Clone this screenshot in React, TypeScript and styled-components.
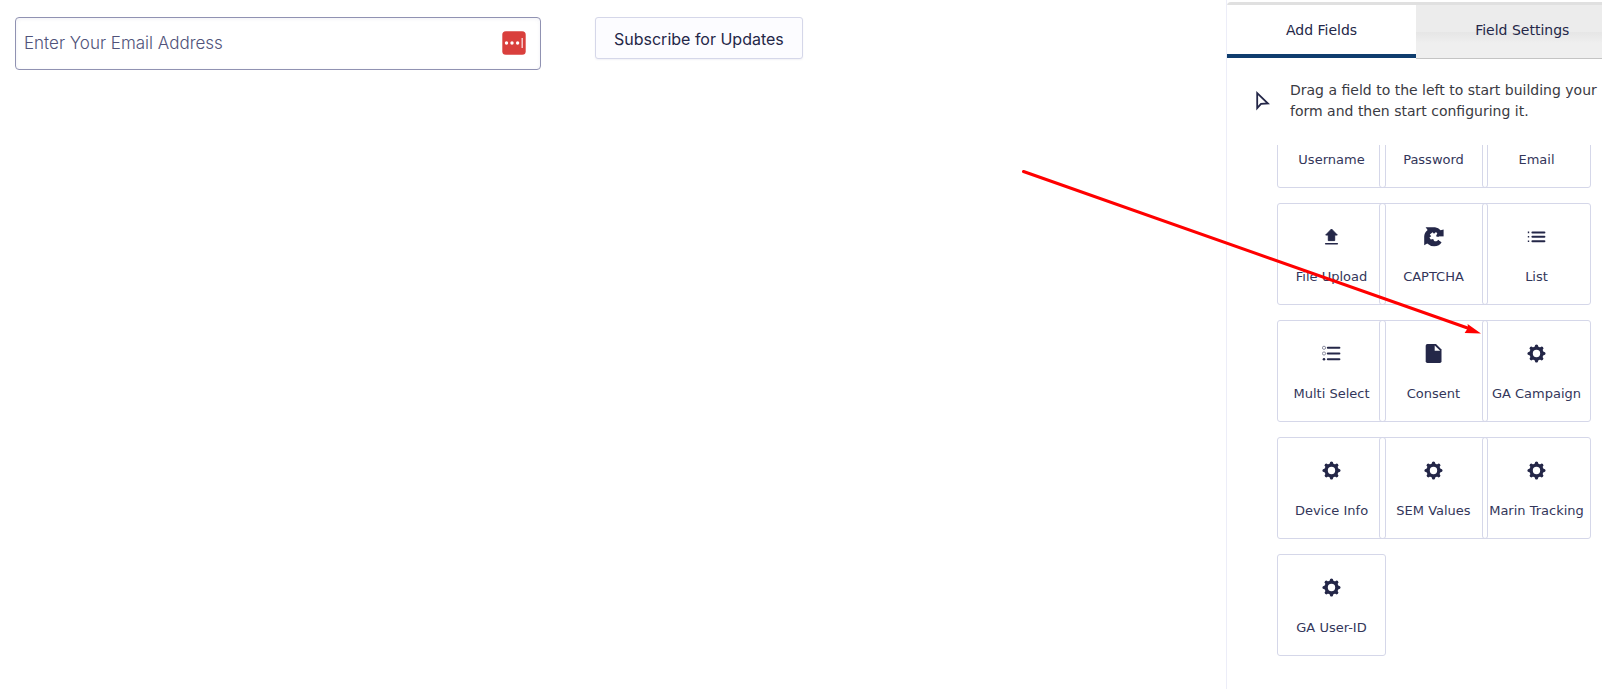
import React from 'react';
import styled, { createGlobalStyle } from 'styled-components';

const GlobalStyle = createGlobalStyle`
  *, *::before, *::after { box-sizing: border-box; }
  body { margin: 0; background: #fff; color: #242748; }
  button, input { font: inherit; color: inherit; margin: 0; }
`;

const verdana = `Verdana, 'DejaVu Sans', sans-serif`;
const inter = `Inter, 'Liberation Sans', sans-serif`;

const Page = styled.div`
  position: relative;
  display: flex;
  min-height: 100vh;
  overflow: hidden;
`;

const Canvas = styled.main`
  flex: 1;
  min-width: 0;
  padding: 17px 15px;
`;

const Form = styled.form`
  display: flex;
  align-items: flex-start;
  gap: 54px;
`;

const EmailBox = styled.label`
  display: flex;
  align-items: center;
  flex: 0 1 526px;
  height: 53px;
  padding: 0 14px 1px 8px;
  border: 1px solid #9092b2;
  border-radius: 4px;
  box-shadow: inset 0 1px 4px rgba(18, 25, 97, 0.06);
  font-family: ${inter};
`;

const EmailInput = styled.input`
  flex: 1;
  min-width: 0;
  padding: 0;
  border: 0;
  outline: 0;
  background: transparent;
  font-size: 17px;
  line-height: 24px;
  &::placeholder { color: #50537a; opacity: 1; font-weight: 300; }
`;

const SubmitButton = styled.button`
  height: 42px;
  padding: 1px 18px 0;
  border: 1px solid #d5d7e9;
  border-radius: 3px;
  background: #fcfcff;
  box-shadow: 0 1px 2px rgba(18, 25, 97, 0.06);
  font-family: ${inter};
  font-size: 16px;
  line-height: 24px;
  white-space: nowrap;
`;

const Sidebar = styled.aside`
  flex: 0 0 376px;
  min-width: 0;
  overflow: hidden;
  border-left: 1px solid #ecedf8;
  padding-top: 2px;
  font-family: ${verdana};
`;

const Tabs = styled.div`
  display: flex;
  border-top: 3px solid #e0e0e0;
  border-top-left-radius: 4px;
`;

const Tab = styled.button<{ $active?: boolean }>`
  flex: none;
  height: ${p => (p.$active ? 53 : 54)}px;
  padding: 0 59px ${p => (p.$active ? 0 : 3)}px;
  border: 0;
  border-bottom: ${p => (p.$active ? '4px solid #0f3d6e' : '1px solid #c4c4c4')};
  background: ${p => (p.$active ? '#fff' : 'linear-gradient(#ececec 50%, #e6e6e6 52%, #efefef 72%)')};
  font-size: 14px;
  line-height: 20px;
  text-align: center;
`;

const Hint = styled.div`
  display: flex;
  align-items: center;
  gap: 20px;
  width: 400px;
  padding: 21px 0 23px 29px;
  color: #3a3a42;
  font-size: 14px;
  line-height: 21px;
  p { margin: 0; }
  svg { flex: none; }
`;

const FieldViewport = styled.div`
  overflow: hidden;
  padding-left: 50px;
`;

const FieldGrid = styled.div`
  display: grid;
  grid-template-columns: 102px 103px 109px;
  gap: 15px 0;
  margin-top: -59px;
`;

const FieldCard = styled.button`
  display: flex;
  flex-direction: column;
  align-items: center;
  gap: 20px;
  width: 109px;
  height: 102px;
  padding: 23px 0 0;
  border: 1px solid #d5d7e9;
  border-radius: 3px;
  background: transparent;
  color: #33365a;
  font-size: 13px;
  line-height: 20px;
  white-space: nowrap;
  svg { flex: none; color: #242748; }
`;

const Annotation = styled.svg`
  position: absolute;
  top: 165px;
  right: 121px;
  pointer-events: none;
`;

type IconName = 'upload' | 'captcha' | 'list' | 'multi' | 'page' | 'gear';

const shapes: Record<IconName, React.ReactNode> = {
  upload: (
    <>
      <path d="M9.5 2 15.3 8h-2.6v5.6H6.3V8H3.7z" stroke="currentColor" strokeWidth="1" strokeLinejoin="round" />
      <path d="M3.7 16.8h11.6" stroke="currentColor" strokeWidth="1.6" strokeLinecap="round" />
    </>
  ),
  captcha: (
    <>
      <path d="M1.6.2H11Q14.5.5 16.6 3.2L19.6 2.6V9.6H15L14.6 13 17.6 15.2Q15.5 19.2 10.2 19.3 6 19.3 3.2 16.6L.2 18.2V9.6Q.2 5.6 3.6 3z" />
      <path d="M8.6 5.3 10 6.8 12 5 13.3 6.6 12.2 8.6 12.6 9.7H20V14.2L17.8 15.2 14.6 12.8 13.2 13.8Q11.6 14.8 10 13.8L9.2 12.1 6.8 12.4 5.4 10.4 7.2 9.3 5.8 7.6z" fill="#fff" />
    </>
  ),
  list: (
    <>
      <path d="M5.4 5.4h12M5.4 9.8h12M5.4 14.2h12" stroke="currentColor" strokeWidth="2" strokeLinecap="round" />
      <path d="M.8 5.4h1.4M.8 9.8h1.4M.8 14.2h1.4" stroke="currentColor" strokeWidth="1.6" />
    </>
  ),
  multi: (
    <>
      <path d="M5.8 3.8h11.6M5.8 9.5h11.6M5.8 15.2h11.6" stroke="currentColor" strokeWidth="2" strokeLinecap="round" />
      <g fill="none" stroke="currentColor" strokeWidth=".5">
        <circle cx="2" cy="3.8" r="1.6" />
        <circle cx="2" cy="9.5" r="1.6" />
      </g>
      <circle cx="2" cy="15.2" r="1.3" />
    </>
  ),
  page: (
    <>
      <path d="M3.4 0h8.6L17.5 5.5v11.8a1.7 1.7 0 0 1-1.7 1.7H3.4a1.7 1.7 0 0 1-1.7-1.7V1.7A1.7 1.7 0 0 1 3.4 0z" />
      <path d="M10.7 1.5v5.3h5.5z" fill="#fff" />
    </>
  ),
  gear: (
    <g transform="translate(-.5 -.5)">
      <circle cx="10" cy="10" r="5.4" fill="none" stroke="currentColor" strokeWidth="3.4" />
      {[0, 45, 90, 135, 180, 225, 270, 315].map(a => (
        <path key={a} d="M8 3.8 8.7 1.5Q10 .3 11.3 1.5L12 3.8z" transform={`rotate(${a} 10 10)`} />
      ))}
    </g>
  ),
};

const Icon = ({ name }: { name: IconName }) => (
  <svg width="20" height="20" viewBox="0 0 20 20" fill="currentColor" aria-hidden="true">
    {shapes[name]}
  </svg>
);

const fields: { label: string; icon: IconName }[] = [
  { label: 'Username', icon: 'page' },
  { label: 'Password', icon: 'page' },
  { label: 'Email', icon: 'page' },
  { label: 'File Upload', icon: 'upload' },
  { label: 'CAPTCHA', icon: 'captcha' },
  { label: 'List', icon: 'list' },
  { label: 'Multi Select', icon: 'multi' },
  { label: 'Consent', icon: 'page' },
  { label: 'GA Campaign', icon: 'gear' },
  { label: 'Device Info', icon: 'gear' },
  { label: 'SEM Values', icon: 'gear' },
  { label: 'Marin Tracking', icon: 'gear' },
  { label: 'GA User-ID', icon: 'gear' },
];

export default function App() {
  return (
    <Page>
      <GlobalStyle />
      <Canvas>
        <Form onSubmit={e => e.preventDefault()}>
          <EmailBox>
            <EmailInput type="email" placeholder="Enter Your Email Address" aria-label="Enter Your Email Address" />
            <svg width="24" height="24" viewBox="0 0 24 24" aria-hidden="true">
              <rect x=".3" y=".3" width="23.4" height="23.4" rx="3.5" fill="#d93f3c" />
              <g fill="#fff">
                <circle cx="4.5" cy="12" r="1.7" />
                <circle cx="10" cy="12" r="1.7" />
                <circle cx="15.6" cy="12" r="1.7" />
                <rect x="19.6" y="7" width="1.1" height="10" />
              </g>
            </svg>
          </EmailBox>
          <SubmitButton type="submit">Subscribe for Updates</SubmitButton>
        </Form>
      </Canvas>
      <Sidebar>
        <Tabs role="tablist">
          <Tab type="button" role="tab" aria-selected="true" $active>Add Fields</Tab>
          <Tab type="button" role="tab" aria-selected="false">Field Settings</Tab>
        </Tabs>
        <Hint>
          <svg width="14" height="20" viewBox="0 0 14 20" fill="none" stroke="#242748" strokeWidth="1.8" aria-hidden="true">
            <path d="M1.2 2.2v15l3.8-4.4 7-.3z" />
          </svg>
          <p>
            Drag a field to the left to start building your
            <br />
            form and then start configuring it.
          </p>
        </Hint>
        <FieldViewport>
          <FieldGrid>
            {fields.map(f => (
              <FieldCard type="button" key={f.label}>
                <Icon name={f.icon} />
                {f.label}
              </FieldCard>
            ))}
          </FieldGrid>
        </FieldViewport>
      </Sidebar>
      <Annotation width="460" height="172" viewBox="0 0 460 172" aria-hidden="true">
        <path d="M2.5 6.5 448 163.5" stroke="#f00" strokeWidth="3" strokeLinecap="round" />
        <path d="M460 168.5 443.6 168 447 163 446.6 159z" fill="#f00" />
      </Annotation>
    </Page>
  );
}
